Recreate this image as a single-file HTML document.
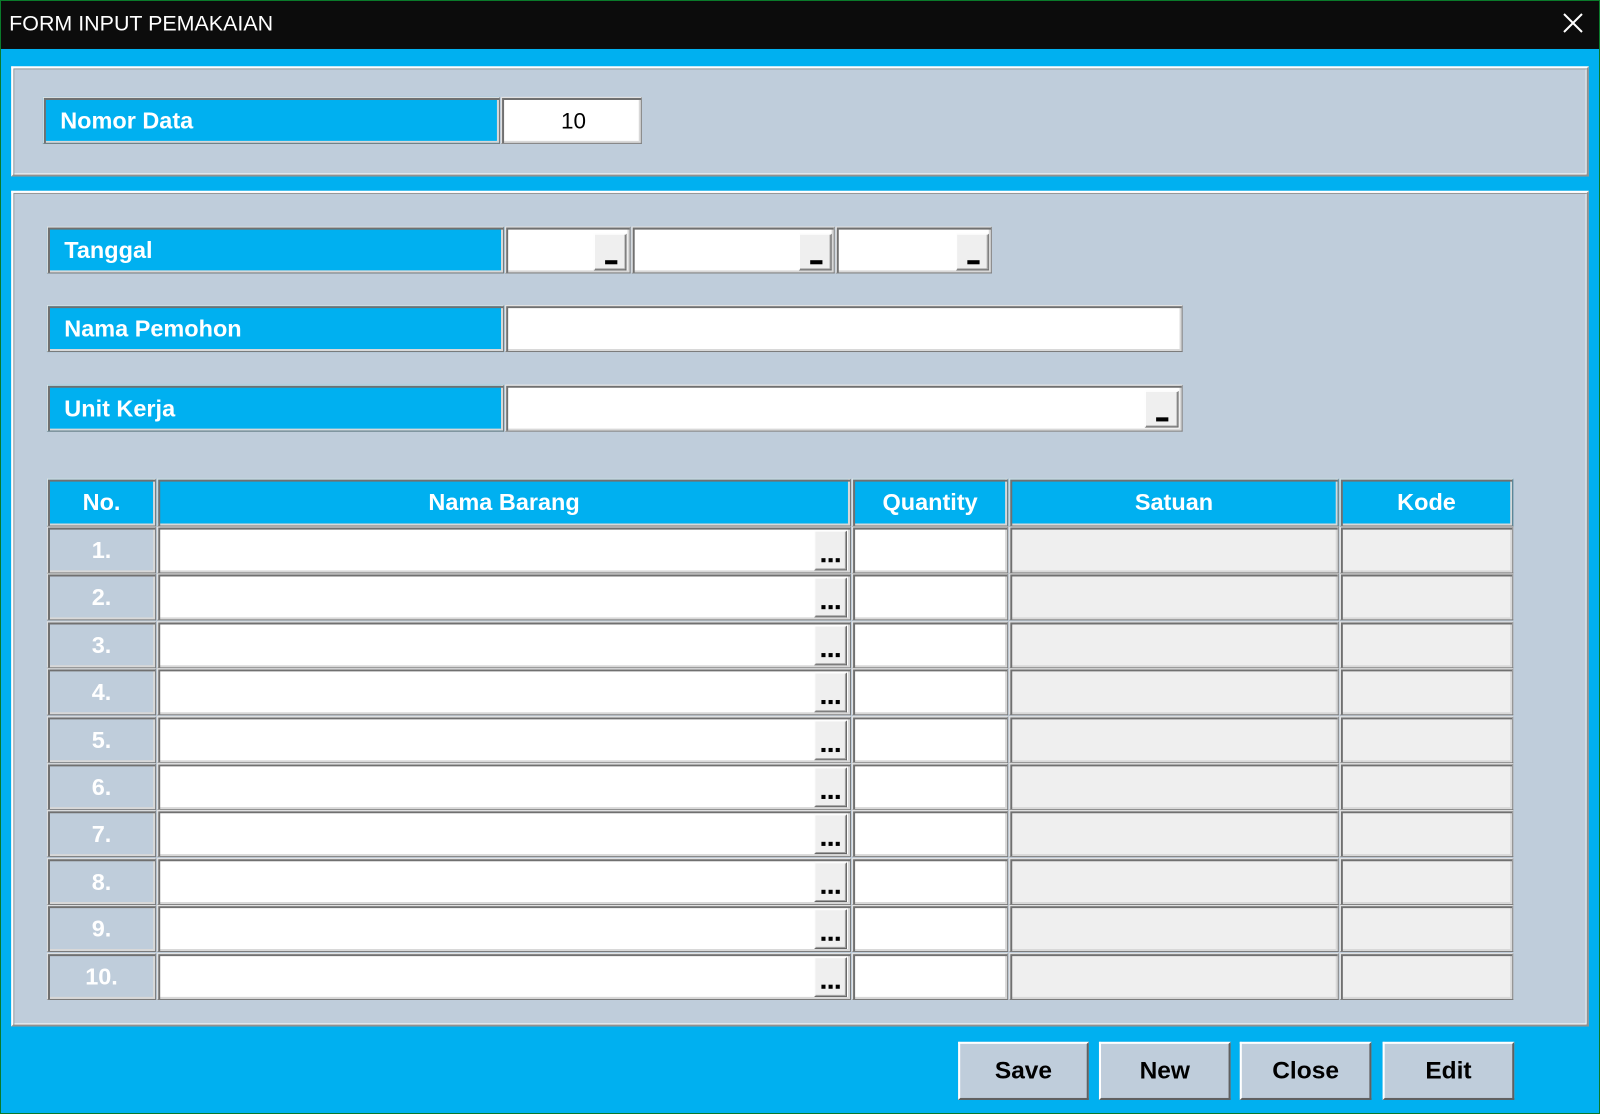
<!DOCTYPE html>
<html style="margin:0;padding:0;width:1600px;height:1114px;overflow:hidden"><head><meta charset="utf-8"><style>
*{box-sizing:border-box;margin:0;padding:0}
html,body{width:1600px;height:1114px;overflow:hidden}
body{position:relative;background:#00b0f0;font-family:"Liberation Sans",sans-serif}
.a{position:absolute}
#wrap{position:absolute;left:0;top:0;width:1568px;height:1092px;transform:scale(1.0204);transform-origin:0 0}
.title{left:0;top:0;width:1568px;height:48px;background:#0c0c0c;color:#fff;font-size:21px;line-height:48px;padding-left:9px}
.panel{background:#bfcddb;border:2px solid;border-color:#fff #909090 #909090 #fff;box-shadow:inset 1px 1px #909090,inset -1px -1px #fff}
.c{position:absolute;border:1px solid;border-color:#e0e0e0 #7a7a7a #7a7a7a #e0e0e0;box-shadow:inset 2px 2px #707070,inset -2px -2px #d8d8d8}
.lbl{background:#00b0f0;color:#fff;font-weight:bold;font-size:23px;padding-left:16px;line-height:44px}
.hd{background:#00b0f0;color:#fff;font-weight:bold;font-size:23px;text-align:center;line-height:44px}
.w{background:#fff}
.g{background:#efefef}
.n{background:#bfcddb;color:#fff;font-weight:bold;font-size:23px;text-align:center;line-height:44px}
.b{position:absolute;background:#efefef;border:1px solid;border-color:#fff #606060 #606060 #fff;box-shadow:inset -1px -1px #a0a0a0}
.b::after{content:"";position:absolute;left:10px;bottom:5px;width:12px;height:4px;background:#000}
.d{position:absolute;background:#efefef;border:1px solid;border-color:#fff #606060 #606060 #fff;box-shadow:inset -1px -1px #a0a0a0}
.d i{position:absolute;bottom:7px;width:4px;height:4px;background:#000}
.btn{position:absolute;top:1021px;height:57px;background:#bfcddb;border:2px solid;border-color:#fff #606060 #606060 #fff;font-weight:bold;font-size:24px;text-align:center;line-height:53px;color:#000}
</style></head><body>
<div id="wrap">
<div class="a title">FORM INPUT PEMAKAIAN</div>
<div class="a panel" style="left:11px;top:65px;width:1546px;height:108px"></div>
<div class="a panel" style="left:11px;top:187px;width:1546px;height:819px"></div>

<div class="c lbl" style="left:42px;top:95px;width:448px;height:46px">Nomor Data</div>
<div class="c w" style="left:491px;top:95px;width:138px;height:46px;text-align:center;font-size:22px;line-height:46px;padding-left:4px">10</div>

<div class="c lbl" style="left:46px;top:222px;width:448px;height:46px">Tanggal</div>
<div class="c w" style="left:495px;top:222px;width:123px;height:46px"></div>
<div class="b" style="left:582px;top:229px;width:32px;height:36px"></div>
<div class="c w" style="left:619px;top:222px;width:199px;height:46px"></div>
<div class="b" style="left:783px;top:229px;width:32px;height:36px"></div>
<div class="c w" style="left:819px;top:222px;width:153px;height:46px"></div>
<div class="b" style="left:937px;top:229px;width:32px;height:36px"></div>

<div class="c lbl" style="left:46px;top:299px;width:448px;height:46px">Nama Pemohon</div>
<div class="c w" style="left:495px;top:299px;width:664px;height:46px"></div>

<div class="c lbl" style="left:46px;top:377px;width:448px;height:46px">Unit Kerja</div>
<div class="c w" style="left:495px;top:377px;width:664px;height:46px"></div>
<div class="b" style="left:1122px;top:383px;width:33px;height:36px"></div>

<div class="c hd" style="left:46px;top:469px;width:107px;height:47px">No.</div>
<div class="c hd" style="left:154px;top:469px;width:680px;height:47px">Nama Barang</div>
<div class="c hd" style="left:835px;top:469px;width:153px;height:47px">Quantity</div>
<div class="c hd" style="left:989px;top:469px;width:323px;height:47px">Satuan</div>
<div class="c hd" style="left:1313px;top:469px;width:170px;height:47px">Kode</div>

<div id="rows"></div>

<div class="btn" style="left:939px;width:128px">Save</div>
<div class="btn" style="left:1077px;width:129px">New</div>
<div class="btn" style="left:1215px;width:129px">Close</div>
<div class="btn" style="left:1355px;width:129px">Edit</div>
</div>
<svg class="a" style="left:1562px;top:12px" width="22" height="22" viewBox="0 0 22 22"><path d="M2 2L20 20M20 2L2 20" stroke="#fff" stroke-width="2"/></svg>
<div class="a" style="left:1599px;top:0;width:1px;height:1114px;background:#0a7a2a"></div>
<div class="a" style="left:0;top:0;width:1px;height:1114px;background:#0a7a2a"></div>
<div class="a" style="left:0;top:0;width:1600px;height:1px;background:#0a7a2a"></div>
<div class="a" style="left:0;top:1113px;width:1600px;height:1px;background:#0a7a2a"></div>
<script>
var h='';
for(var i=0;i<10;i++){
 var t=Math.round(516+46.4*i);
 h+='<div class="c n" style="left:46px;top:'+t+'px;width:107px;height:46px">'+(i+1)+'.</div>';
 h+='<div class="c w" style="left:154px;top:'+t+'px;width:680px;height:46px"></div>';
 h+='<div class="d" style="left:798px;top:'+(t+4)+'px;width:32px;height:39px"><i style="left:6px"></i><i style="left:13px"></i><i style="left:20px"></i></div>';
 h+='<div class="c w" style="left:835px;top:'+t+'px;width:153px;height:46px"></div>';
 h+='<div class="c g" style="left:989px;top:'+t+'px;width:323px;height:46px"></div>';
 h+='<div class="c g" style="left:1313px;top:'+t+'px;width:170px;height:46px"></div>';
}
document.getElementById('rows').innerHTML=h;
</script>
</body></html>
